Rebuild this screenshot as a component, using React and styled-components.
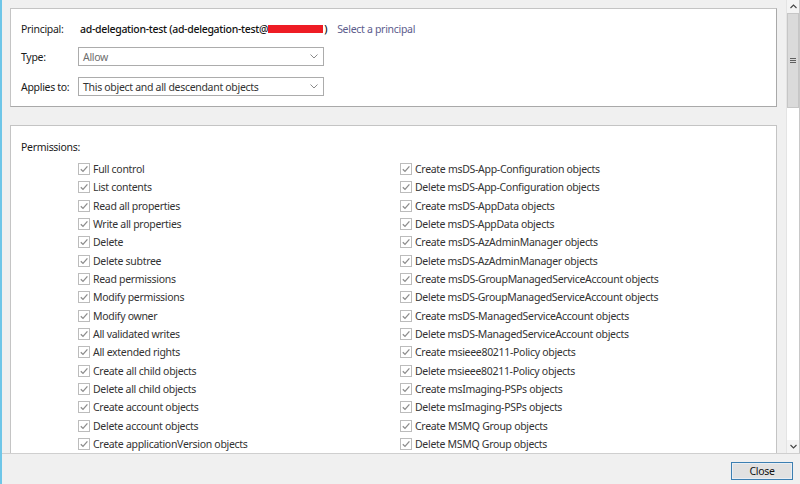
import React from "react";
import styled, { createGlobalStyle } from "styled-components";

const GlobalStyle = createGlobalStyle`
  html, body {
    margin: 0;
    padding: 0;
    background: #f0f0f0;
  }
  body {
    font-family: "Noto Sans", "Open Sans", sans-serif;
    font-size: 10.5px;
    letter-spacing: -0.3px;
    color: #1e1e1e;
  }
`;

const leftPerms = [
  "Full control",
  "List contents",
  "Read all properties",
  "Write all properties",
  "Delete",
  "Delete subtree",
  "Read permissions",
  "Modify permissions",
  "Modify owner",
  "All validated writes",
  "All extended rights",
  "Create all child objects",
  "Delete all child objects",
  "Create account objects",
  "Delete account objects",
  "Create applicationVersion objects",
];

const rightPerms = [
  "Create msDS-App-Configuration objects",
  "Delete msDS-App-Configuration objects",
  "Create msDS-AppData objects",
  "Delete msDS-AppData objects",
  "Create msDS-AzAdminManager objects",
  "Delete msDS-AzAdminManager objects",
  "Create msDS-GroupManagedServiceAccount objects",
  "Delete msDS-GroupManagedServiceAccount objects",
  "Create msDS-ManagedServiceAccount objects",
  "Delete msDS-ManagedServiceAccount objects",
  "Create msieee80211-Policy objects",
  "Delete msieee80211-Policy objects",
  "Create msImaging-PSPs objects",
  "Delete msImaging-PSPs objects",
  "Create MSMQ Group objects",
  "Delete MSMQ Group objects",
];

const Chevron = () => (
  <svg width="8" height="5" viewBox="0 0 8 5">
    <path d="M0.5 0.5 L4 4 L7.5 0.5" fill="none" stroke="#8a8a8a" strokeWidth="1" />
  </svg>
);

const Check = ({ label }) => (
  <PermRow>
    <Box>
      <svg width="10" height="10" viewBox="0 0 10 10">
        <path d="M1.8 5.2 L4 7.4 L8.4 2.4" fill="none" stroke="#8c8c8c" strokeWidth="1.3" />
      </svg>
    </Box>
    <PermLabel>{label}</PermLabel>
  </PermRow>
);

const App = () => {
  return (
    <Window>
      <GlobalStyle />
      <Main>
        <Content>
          <Panel>
            <FieldRow>
              <Label>Principal:</Label>
              <PrincipalName>
                ad-delegation-test (ad-delegation-test@
                <Redact />)
              </PrincipalName>
              <Link>Select a principal</Link>
            </FieldRow>
            <FieldRow>
              <Label>Type:</Label>
              <Combo muted>
                <span>Allow</span>
                <Chevron />
              </Combo>
            </FieldRow>
            <FieldRow>
              <Label>Applies to:</Label>
              <Combo>
                <span>This object and all descendant objects</span>
                <Chevron />
              </Combo>
            </FieldRow>
          </Panel>
          <PermPanel>
            <PermTitle>Permissions:</PermTitle>
            <PermGrid>
              <PermColumn>
                {leftPerms.map((p) => (
                  <Check key={p} label={p} />
                ))}
              </PermColumn>
              <PermColumn>
                {rightPerms.map((p) => (
                  <Check key={p} label={p} />
                ))}
              </PermColumn>
            </PermGrid>
          </PermPanel>
        </Content>
        <Scrollbar>
          <ScrollArrow>
            <svg width="7" height="5" viewBox="0 0 7 5">
              <path d="M0.5 4 L3.5 1 L6.5 4" fill="none" stroke="#444" strokeWidth="1.1" />
            </svg>
          </ScrollArrow>
          <Thumb>
            <Grip />
          </Thumb>
          <Track />
          <ScrollArrow>
            <svg width="7" height="5" viewBox="0 0 7 5">
              <path d="M0.5 1 L3.5 4 L6.5 1" fill="none" stroke="#444" strokeWidth="1.1" />
            </svg>
          </ScrollArrow>
        </Scrollbar>
      </Main>
      <Footer>
        <CloseButton>Close</CloseButton>
      </Footer>
    </Window>
  );
};

const Window = styled.div`
  width: 800px;
  height: 484px;
  box-sizing: border-box;
  border-left: 2px solid #6ec6e8;
  display: flex;
  flex-direction: column;
  overflow: hidden;
  background: #f0f0f0;
`;

const Main = styled.div`
  height: 454px;
  display: flex;
  border-bottom: 1px solid #cfcfcf;
  box-sizing: border-box;
  overflow: hidden;
`;

const Content = styled.div`
  flex: 1;
  padding: 8px 9px 0 8px;
  display: flex;
  flex-direction: column;
  gap: 18px;
`;

const Panel = styled.div`
  height: 99px;
  box-sizing: border-box;
  background: #fff;
  border: 1px solid #c4c4c4;
  border-right-color: #a9a9a9;
  border-bottom-color: #a9a9a9;
  padding: 12px 0 0 10px;
  display: flex;
  flex-direction: column;
  gap: 11px;
`;

const FieldRow = styled.div`
  display: flex;
  align-items: center;
  height: 19px;
  &:first-child {
    height: 16px;
    margin-bottom: -1px;
  }
`;

const Label = styled.span`
  width: 59px;
  flex-shrink: 0;
  color: #1a1a1a;
`;

const PrincipalName = styled.span`
  color: #111;
  font-weight: 500;
  display: flex;
  align-items: center;
`;

const Redact = styled.span`
  display: inline-block;
  width: 55px;
  height: 8px;
  background: #ee1c24;
  margin-right: 1px;
`;

const Link = styled.span`
  margin-left: 10px;
  color: #5c5c8c;
`;

const Combo = styled.div`
  width: 246px;
  height: 19px;
  margin-left: -2px;
  box-sizing: border-box;
  border: 1px solid #acacac;
  background: #fff;
  display: flex;
  align-items: center;
  justify-content: space-between;
  padding: 0 5px 0 4px;
  color: ${(p) => (p.muted ? "#6d6d6d" : "#333")};
`;

const PermPanel = styled.div`
  flex: 1;
  background: #fff;
  border: 1px solid #c4c4c4;
  border-bottom: none;
  padding: 14px 0 0 10px;
`;

const PermTitle = styled.div`
  color: #1a1a1a;
  height: 15px;
  line-height: 15px;
  margin-bottom: 5px;
`;

const PermGrid = styled.div`
  display: grid;
  grid-template-columns: 322px 1fr;
  padding-left: 57px;
`;

const PermColumn = styled.div`
  display: flex;
  flex-direction: column;
`;

const PermRow = styled.div`
  display: flex;
  align-items: center;
  height: 18.33px;
`;

const Box = styled.span`
  width: 12px;
  height: 12px;
  box-sizing: border-box;
  border: 1px solid #bcbcbc;
  background: #fff;
  display: flex;
  align-items: center;
  justify-content: center;
  margin-right: 3px;
  flex-shrink: 0;
`;

const PermLabel = styled.span`
  color: #333;
  white-space: nowrap;
`;

const Scrollbar = styled.div`
  width: 12px;
  display: flex;
  flex-direction: column;
  background: #fff;
  border-left: 1px solid #e4e4e4;
  border-right: 1px solid #c8c8c8;
`;

const ScrollArrow = styled.div`
  height: 13px;
  display: flex;
  align-items: center;
  justify-content: center;
  background: #f4f4f4;
`;

const Thumb = styled.div`
  height: 95px;
  box-sizing: border-box;
  background: #dadada;
  border: 1px solid #c6c6c6;
  display: flex;
  align-items: center;
  justify-content: center;
`;

const Grip = styled.span`
  width: 6px;
  height: 5px;
  border-top: 1px solid #606060;
  border-bottom: 1px solid #606060;
  box-sizing: border-box;
  position: relative;
  &::after {
    content: "";
    position: absolute;
    left: 0;
    right: 0;
    top: 1px;
    border-top: 1px solid #606060;
  }
`;

const Track = styled.div`
  flex: 1;
  background: #fff;
`;

const Footer = styled.div`
  flex: 1;
  display: flex;
  justify-content: flex-end;
  align-items: flex-start;
  padding: 8px 7px 0 0;
`;

const CloseButton = styled.button`
  width: 62px;
  height: 18px;
  box-sizing: border-box;
  border: 1px solid #3c7fb1;
  background: #e1e1e1;
  box-shadow: inset 0 0 0 1px #e9eef4;
  font-family: "Noto Sans", "Open Sans", sans-serif;
  font-size: 10.5px;
  letter-spacing: -0.3px;
  color: #111;
  padding: 0;
  line-height: 16px;
`;

export default App;
